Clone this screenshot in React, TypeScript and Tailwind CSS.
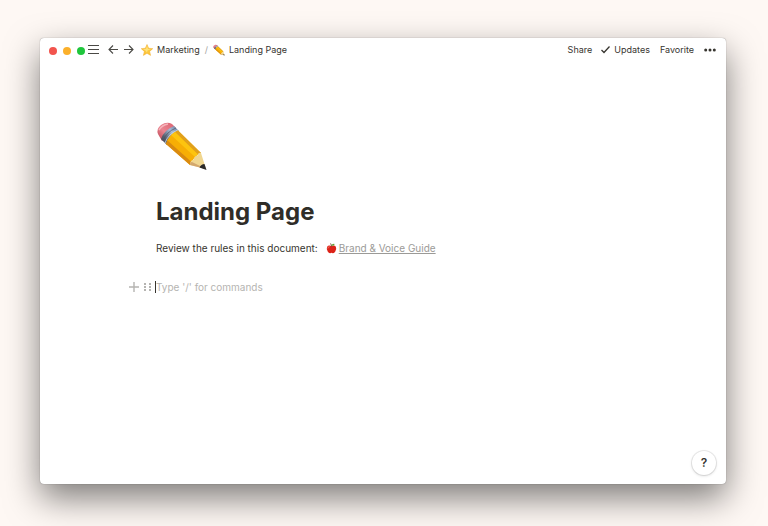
import React from "react";

function Pencil({ className }: { className: string }) {
  return (
    <svg viewBox="0 0 52 50" className={className} aria-hidden="true">
      <defs>
        <linearGradient id="eraser" x1="0" y1="1" x2="1" y2="0">
          <stop offset="0" stopColor="#b8404e" />
          <stop offset="0.45" stopColor="#ea8490" />
          <stop offset="1" stopColor="#d9606e" />
        </linearGradient>
        <linearGradient id="metal" x1="0" y1="1" x2="1" y2="0">
          <stop offset="0" stopColor="#3f4450" />
          <stop offset="0.3" stopColor="#565d6c" />
          <stop offset="0.65" stopColor="#a5bad6" />
          <stop offset="1" stopColor="#5f7596" />
        </linearGradient>
      </defs>
      <path d="M6 20 L2 13 Q0 8 5 4 Q11 0 16 3 L20 7 Z" fill="url(#eraser)" />
      <path d="M3 9 Q6 4 12 3" stroke="#f6b3ba" strokeWidth="1.500" fill="none" />
      <path d="M5 18 Q8 9 18 5 L23 10 Q14 14 11 24 Z" fill="url(#metal)" />
      <path d="M7 20 Q10 11 20 7" stroke="#4b5263" strokeWidth="0.700" fill="none" />
      <path d="M9 22 Q12 13 22 9" stroke="#d8e2ee" strokeWidth="0.800" fill="none" />
      <path d="M10 23 Q12 14 22 9.500 L45 32 Q39 34 34 44 Z" fill="#f7ae05" />
      <path d="M10 23 L11.500 19.500 L35.500 41 L34 44 Z" fill="#d98a10" />
      <path d="M19 11 L22 9.500 L45 32 L42 33.500 Z" fill="#e0a01c" />
      <path d="M15 14 L19 11 L42 33.500 L39 36 Z" fill="#fdc40f" />
      <path d="M34 44 Q34 39 37.500 39 Q38 35 41.500 34.500 Q42 31 45 32 L50 48 Z" fill="#f0d690" />
      <path d="M34 44 Q34 41 36 41 L46 46 L50 48 Z" fill="#d3a76c" />
      <path d="M43.500 46.500 Q45 43 48.500 43 L50.500 49 Z" fill="#2a2929" />
    </svg>
  );
}

function Star() {
  return (
    <svg viewBox="0 0 24 24" className="size-3" aria-hidden="true">
      <path
        d="M12 1 L15.300 8.500 L23.500 9.300 L17.300 14.800 L19.200 22.800 L12 18.600 L4.800 22.800 L6.700 14.800 L0.500 9.300 L8.700 8.500 Z"
        fill="#fcc73c"
        stroke="#f0ab2c"
        strokeWidth="1"
        strokeLinejoin="round"
      />
      <path d="M12 3 L14 10 L20 10.500 L13 13 L12 17 L9 13 L4 10.500 L10 10 Z" fill="#ffe27a" />
    </svg>
  );
}

function Apple() {
  return (
    <svg viewBox="0 0 24 24" className="size-[11px] shrink-0" aria-hidden="true">
      <path
        d="M12 7 Q18 3 21.500 8 Q24 13 20 19 Q16 24 12 21.500 Q8 24 4 19 Q0 13 2.500 8 Q6 3 12 7 Z"
        fill="#dc2318"
      />
      <path d="M4 12 Q4 8 8 8" stroke="#f5776a" strokeWidth="2" fill="none" />
      <path d="M12 8 Q12 4 10 1" stroke="#6b4322" strokeWidth="2" fill="none" />
      <path d="M12 6 Q13 1 19 2 Q17 7 12 6 Z" fill="#5da130" />
    </svg>
  );
}

function Arrow({ d }: { d: string }) {
  return (
    <svg viewBox="0 0 10 10" className="size-[10px]" fill="none" stroke="#4a4945" strokeWidth="1.100" aria-hidden="true">
      <path d={d} />
    </svg>
  );
}

function TopBar() {
  return (
    <header className="flex h-6 items-center justify-between pr-[10px] pl-[9px] text-[9px] text-[#37352f]">
      <nav className="flex items-center" aria-label="Breadcrumb">
        <div className="mt-[2px] flex gap-[6px]">
          <span className="size-[8px] rounded-full bg-[#f2544d]" />
          <span className="size-[8px] rounded-full bg-[#fbb02b]" />
          <span className="size-[8px] rounded-full bg-[#1fc63c]" />
        </div>
        <button aria-label="Menu" className="ml-[3px]">
          <svg viewBox="0 0 11 10" className="h-[10px] w-[11px]" stroke="#4a4945" strokeWidth="1" aria-hidden="true">
            <path d="M0 0.500 H11 M0 4.500 H11 M0 8.500 H11" />
          </svg>
        </button>
        <button aria-label="Back" className="ml-[9px]">
          <Arrow d="M10 4.500 H1 M5 0.500 L1 4.500 L5 8.500" />
        </button>
        <button aria-label="Forward" className="ml-[6px]">
          <Arrow d="M0 4.500 H9 M5 0.500 L9 4.500 L5 8.500" />
        </button>
        <a href="#marketing" className="ml-[7px] flex items-center gap-1">
          <Star />
          Marketing
        </a>
        <span className="mx-[5px] text-[#a5a4a0]">/</span>
        <a href="#landing" className="flex items-center gap-1">
          <Pencil className="size-3" />
          Landing Page
        </a>
      </nav>
      <div className="flex items-center">
        <button>Share</button>
        <button className="ml-[9px] flex items-center gap-1">
          <svg viewBox="0 0 9 8" className="h-2 w-[9px]" fill="none" stroke="#37352f" strokeWidth="1.300" aria-hidden="true">
            <path d="M0.500 4 L3 6.500 L8.500 0.500" />
          </svg>
          Updates
        </button>
        <button className="ml-[10px]">Favorite</button>
        <button aria-label="More" className="ml-[10px]">
          <svg viewBox="0 0 12 4" className="h-1 w-3" fill="#37352f" aria-hidden="true">
            <circle cx="1.700" cy="2" r="1.500" />
            <circle cx="6" cy="2" r="1.500" />
            <circle cx="10.300" cy="2" r="1.500" />
          </svg>
        </button>
      </div>
    </header>
  );
}

export default function App() {
  return (
    <div className="flex h-screen bg-[#fef8f4] pt-[38px] pr-[42px] pb-[42px] pl-[40px] font-['Inter','Liberation_Sans',sans-serif]">
      <div className="relative flex-1 rounded-[4px] bg-white shadow-[0_0_1px_rgba(0,0,0,0.5),0_14px_34px_rgba(0,0,0,0.5)]">
        <TopBar />
        <main className="px-[116px] pt-[59px] text-[10px] leading-4 text-[#37352f]">
          <Pencil className="h-[50px] w-[52px]" />
          <h1 className="mt-[25px] text-[24px] leading-8 font-bold text-[#2f2d28]">Landing Page</h1>
          <p className="mt-3 flex items-center">
            Review the rules in this document:
            <a href="#guide" className="ml-2 flex items-center text-[#9b9a97]">
              <Apple />
              <span className="ml-[2px] underline underline-offset-1">Brand &amp; Voice Guide</span>
            </a>
          </p>
          <div className="mt-[23px] -ml-[27px] flex items-center">
            <button aria-label="Add block">
              <svg viewBox="0 0 10 10" className="size-[10px]" stroke="#b5b4b1" strokeWidth="1.400" aria-hidden="true">
                <path d="M5 0 V10 M0 5 H10" />
              </svg>
            </button>
            <button aria-label="Drag block" className="ml-[5px]">
              <svg viewBox="0 0 7 10" className="h-[10px] w-[7px]" fill="#b5b4b1" aria-hidden="true">
                <path d="M0 1h2v2H0z M5 1h2v2H5z M0 4h2v2H0z M5 4h2v2H5z M0 7h2v2H0z M5 7h2v2H5z" />
              </svg>
            </button>
            <span className="ml-1 h-3 w-px bg-[#37352f]" />
            <input
              aria-label="Block text"
              placeholder="Type '/' for commands"
              className="h-4 flex-1 outline-none placeholder:text-[#b5b4b1]"
            />
          </div>
        </main>
        <button
          aria-label="Help"
          className="absolute right-[10px] bottom-[9px] size-6 rounded-full bg-white text-xs font-semibold text-[#37352f] shadow-[0_0_0_1px_rgba(15,15,15,0.08),0_1px_3px_rgba(15,15,15,0.15)]"
        >
          ?
        </button>
      </div>
    </div>
  );
}
